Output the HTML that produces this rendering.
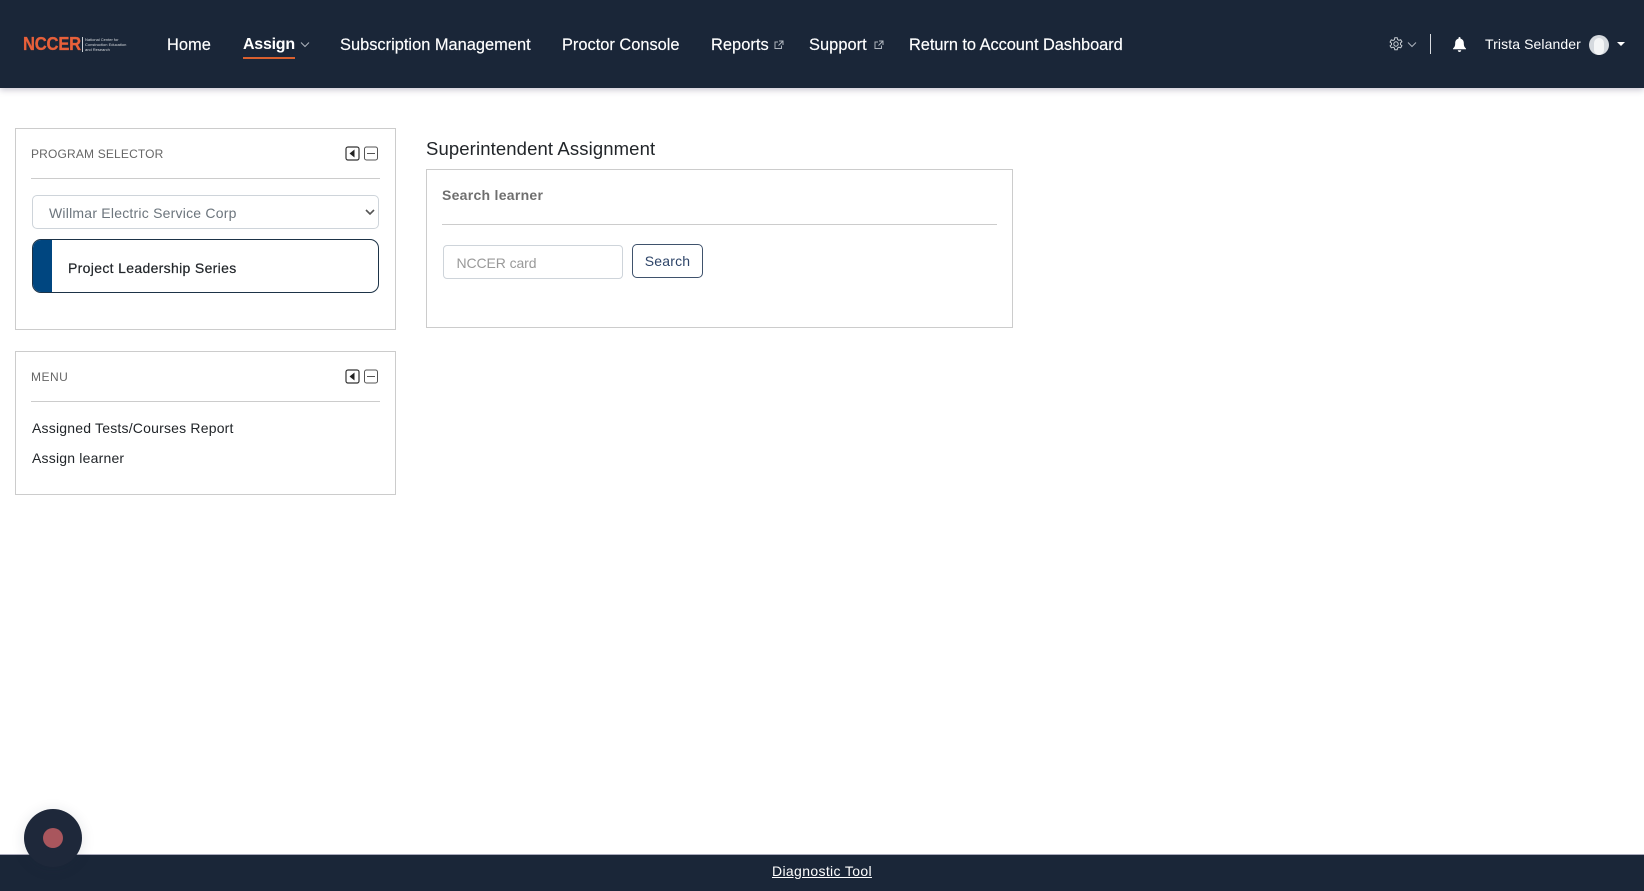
<!DOCTYPE html>
<html lang="en">
<head>
<meta charset="utf-8">
<title>Superintendent Assignment</title>
<style>
*{box-sizing:border-box}
html,body{margin:0;padding:0;background:#fff;width:1644px;height:891px;overflow:hidden;font-family:"Liberation Sans",sans-serif;color:#212529}
a{color:inherit;text-decoration:none}
.abs,.t{position:absolute}
.t{white-space:nowrap;line-height:20px;height:20px}
header{position:absolute;left:0;top:0;width:1644px;height:88px;background:#1a2638;box-shadow:0 2px 6px rgba(60,50,90,.28)}
header .t{color:#fff}
.nav{font-size:16.4px;letter-spacing:.05px;top:35px;-webkit-text-stroke:.15px #fff}
.panel{position:absolute;background:#fff;border:1px solid #ccc}
.rule{position:absolute;height:1px;background:#ccc}
.ptitle{font-size:12px;letter-spacing:.17px;color:#666}
.menu{font-size:14px;letter-spacing:.2px;color:#212529}
select,input,button{font-family:"Liberation Sans",sans-serif;margin:0;outline:0}
input::placeholder{color:#999;opacity:1}
footer{position:absolute;left:0;top:854px;width:1644px;height:37px;background:#1a2638;border-top:1px solid #aab}
</style>
</head>
<body>
<header>
  <div class="t" style="left:23px;top:34px;font-size:18px;font-weight:700;color:#e8603a;letter-spacing:-.2px;transform:scaleX(.92);transform-origin:0 50%;-webkit-text-stroke:.3px #e8603a">NCCER</div>
  <div class="abs" style="left:82px;top:37px;width:1px;height:15px;background:#cfd3d8"></div>
  <div class="abs" style="left:85px;top:37px;font-size:4px;line-height:5px;color:#d5d8dc;white-space:nowrap">National Center for<br>Construction Education<br>and Research</div>

  <a class="t nav" style="left:167px">Home</a>
  <a class="t nav" style="left:243px;top:34.500px;font-weight:700;font-size:16px;letter-spacing:-.25px;-webkit-text-stroke:0">Assign</a>
  <div class="abs" style="left:243px;top:57px;width:52px;height:2px;background:#d9602f"></div>
  <svg class="abs" style="left:300px;top:41px" width="10" height="7" viewBox="0 0 10 7"><path d="M1 1.500l4 4 4-4" fill="none" stroke="#aeb4bd" stroke-width="1"/></svg>
  <a class="t nav" style="left:340px;letter-spacing:.01px">Subscription Management</a>
  <a class="t nav" style="left:562px;letter-spacing:0">Proctor Console</a>
  <a class="t nav" style="left:711px">Reports</a>
  <svg class="abs" style="left:774px;top:40px" width="10" height="10" viewBox="0 0 10 10"><path d="M7.500 5.500v3h-6.500v-6.500h3M5 1h4v4M9 1l-4.500 4.500" fill="none" stroke="#aeb4bd" stroke-width="1"/></svg>
  <a class="t nav" style="left:809px">Support</a>
  <svg class="abs" style="left:874px;top:40px" width="10" height="10" viewBox="0 0 10 10"><path d="M7.500 5.500v3h-6.500v-6.500h3M5 1h4v4M9 1l-4.500 4.500" fill="none" stroke="#aeb4bd" stroke-width="1"/></svg>
  <a class="t nav" style="left:909px;letter-spacing:-.05px">Return to Account Dashboard</a>

  <svg class="abs" style="left:1389px;top:37px" width="14" height="14" viewBox="0 0 14 14"><path d="M5.800 .8h2.400l.4 1.800 1.300.7 1.800-.6 1.200 2.100-1.400 1.200v1.500l1.400 1.200-1.200 2.100-1.800-.6-1.300.7-.4 1.800H5.800l-.4-1.800-1.300-.7-1.800.6L1.100 8.900l1.400-1.200V6.200L1.100 5l1.200-2.100 1.800.6 1.300-.7z" fill="none" stroke="#c9ced4" stroke-width="1"/><circle cx="7" cy="7" r="2.200" fill="none" stroke="#c9ced4" stroke-width="1"/></svg>
  <svg class="abs" style="left:1407px;top:41px" width="10" height="7" viewBox="0 0 10 7"><path d="M1 1.500l4 4 4-4" fill="none" stroke="#aeb4bd" stroke-width="1"/></svg>
  <div class="abs" style="left:1430px;top:34px;width:1px;height:20px;background:#d8dbe0"></div>
  <svg class="abs" style="left:1453px;top:37px" width="13" height="15" viewBox="0 0 13 15"><path d="M6.500 0c.6 0 1 .4 1 1v.6c2 .5 3.300 2.200 3.300 4.400 0 3 .6 4 2.200 5.500v.8H0v-.8C1.600 10 2.200 9 2.200 6c0-2.200 1.300-3.900 3.300-4.400V1c0-.6.400-1 1-1zM4.800 13.300h3.400c0 1-.8 1.700-1.700 1.700s-1.700-.7-1.700-1.700z" fill="#fff"/></svg>
  <div class="t" style="left:1485px;top:34px;font-size:14px;letter-spacing:.1px">Trista Selander</div>
  <div class="abs" style="left:1589px;top:35px;width:20px;height:20px;border-radius:50%;background:#d5d9de;overflow:hidden"><div class="abs" style="left:5px;top:3px;width:10px;height:17px;border-radius:5px;background:#f4f5f6"></div></div>
  <div class="abs" style="left:1617px;top:42px;width:0;height:0;border-left:4px solid transparent;border-right:4px solid transparent;border-top:4px solid #fff"></div>
</header>

<div class="panel" style="left:15px;top:128px;width:381px;height:202px"></div>
<div class="t ptitle" style="left:31px;top:144px">PROGRAM SELECTOR</div>
<svg class="abs" style="left:345px;top:145.500px" width="34" height="15" viewBox="0 0 34 15"><rect x="1" y="1" width="13" height="13" rx="2" fill="#fff" stroke="#333" stroke-width="1.200"/><path d="M9.500 3.500v8L4.500 7.500z" fill="#222"/><rect x="19.500" y="1" width="13" height="13" rx="2" fill="#fff" stroke="#555" stroke-width="1"/><path d="M22 7.500h8" stroke="#555" stroke-width="1"/></svg>
<div class="rule" style="left:31px;top:178px;width:349px"></div>
<select style="position:absolute;left:32px;top:195px;width:347px;height:34px;border:1px solid #ced4da;border-radius:5px;background:#fff;color:#6c757d;font-size:14px;letter-spacing:.22px;padding:2px 0 0 16px;appearance:none;-webkit-appearance:none"><option>Willmar Electric Service Corp</option></select>
<svg class="abs" style="left:365px;top:209px" width="10" height="7" viewBox="0 0 10 7"><path d="M1 1l4 4 4-4" fill="none" stroke="#555" stroke-width="1.600"/></svg>
<div class="abs" style="left:32px;top:239px;width:347px;height:54px;border:1px solid #1d3347;border-radius:9px;overflow:hidden;background:#fff"><div style="width:19px;height:100%;background:#004680"></div></div>
<div class="t" style="left:68px;top:258px;font-size:14px;letter-spacing:.33px;color:#212529;-webkit-text-stroke:.2px #212529">Project Leadership Series</div>

<div class="panel" style="left:15px;top:351px;width:381px;height:144px"></div>
<div class="t ptitle" style="left:31px;top:366.500px;letter-spacing:.5px">MENU</div>
<svg class="abs" style="left:345px;top:368.500px" width="34" height="15" viewBox="0 0 34 15"><rect x="1" y="1" width="13" height="13" rx="2" fill="#fff" stroke="#333" stroke-width="1.200"/><path d="M9.500 3.500v8L4.500 7.500z" fill="#222"/><rect x="19.500" y="1" width="13" height="13" rx="2" fill="#fff" stroke="#555" stroke-width="1"/><path d="M22 7.500h8" stroke="#555" stroke-width="1"/></svg>
<div class="rule" style="left:31px;top:401px;width:349px"></div>
<a class="t menu" style="left:32px;top:418px">Assigned Tests/Courses Report</a>
<a class="t menu" style="left:32px;top:448px">Assign learner</a>

<div class="t" style="left:426px;top:139px;font-size:18.500px;letter-spacing:.12px;color:#212529">Superintendent Assignment</div>
<div class="panel" style="left:426px;top:169px;width:587px;height:159px"></div>
<div class="t" style="left:442px;top:185px;font-size:14px;font-weight:700;color:#6f6f6f;letter-spacing:.28px">Search learner</div>
<div class="rule" style="left:442px;top:224px;width:555px"></div>
<input placeholder="NCCER card" style="position:absolute;left:442.500px;top:245px;width:180px;height:34px;border:1px solid #ced4da;border-radius:4px;padding:1px 0 0 13px;font-size:14px;letter-spacing:-.1px;background:#fff">
<button style="position:absolute;left:632px;top:244px;width:71px;height:34px;border:1px solid #3f526c;border-radius:5px;background:#fff;color:#2d4468;font-size:14px;letter-spacing:.2px;padding:0">Search</button>

<footer><a class="t" style="left:772px;top:6px;font-size:14px;letter-spacing:.35px;color:#fff;text-decoration:underline">Diagnostic Tool</a></footer>

<div class="abs" style="left:24px;top:809px;width:58px;height:58px;border-radius:50%;background:#1e283a;box-shadow:0 2px 14px rgba(30,40,60,.12)"></div>
<div class="abs" style="left:43px;top:828px;width:20px;height:20px;border-radius:50%;background:#a9565d"></div>
</body>
</html>
